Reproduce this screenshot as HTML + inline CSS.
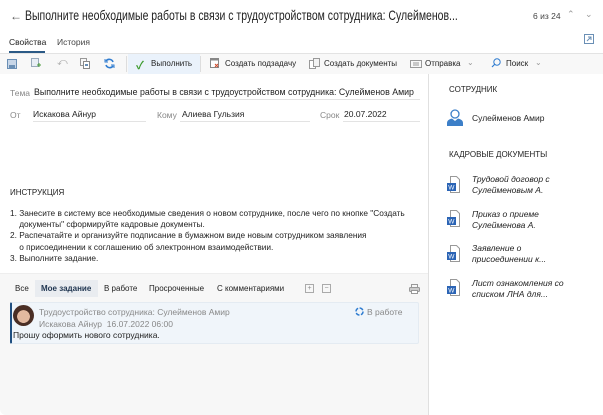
<!DOCTYPE html>
<html><head><meta charset="utf-8">
<style>
*{margin:0;padding:0;box-sizing:border-box}
body{width:603px;height:415px;overflow:hidden;background:#fff;font-family:"Liberation Sans","Noto Sans CJK SC",sans-serif;color:#222;font-size:8.5px;position:relative}
.a{position:absolute;white-space:nowrap}
.g{color:#888}
.ln{position:absolute;height:1px;background:#e3e3e3}
.ic{position:absolute}
</style></head><body>
<div class="a" style="left:10px;top:9px;font-size:12px;color:#555">←</div>
<div class="a" style="left:25px;top:8px;font-size:13.8px;color:#222;transform:scaleX(0.76);transform-origin:0 0">Выполните необходимые работы в связи с трудоустройством сотрудника: Сулейменов...</div>
<div class="a" style="left:533px;top:11px;font-size:8.5px;color:#444">6 из 24</div>
<div class="a" style="left:567px;top:9px;font-size:9px;color:#999">&#8963;</div>
<div class="a" style="left:585px;top:9px;font-size:9px;color:#999">&#8964;</div>
<div class="a" style="left:9px;top:37px;font-size:8.5px;color:#222">Свойства</div>
<div class="a" style="left:57px;top:37px;font-size:8.5px;color:#444">История</div>
<div style="position:absolute;left:9px;top:51px;width:36px;height:2px;background:#2b5a86"></div>
<svg class="ic" style="left:584px;top:34px" width="10" height="10"><rect x="0.5" y="0.5" width="9" height="9" fill="none" stroke="#6a8fb5"/><path d="M3 7L7 3M4 3h3v3" stroke="#6a8fb5" fill="none"/></svg>
<div class="ln" style="left:0;top:53px;width:603px"></div>
<div style="position:absolute;left:0;top:54px;width:603px;height:20px;background:#f8f8f8"></div>
<svg class="ic" style="left:7px;top:59px" width="10" height="10"><rect x="0.5" y="0.5" width="9" height="9" fill="#c7d6e8" stroke="#6a8fb5"/><rect x="2" y="6" width="6" height="3" fill="#6a8fb5"/></svg>
<svg class="ic" style="left:31px;top:58px" width="10" height="11"><rect x="0.5" y="0.5" width="7" height="8" fill="#e8eef5" stroke="#9ab"/><path d="M6 7h4M8 5v4" stroke="#4a9a3a"/></svg>
<div class="a" style="left:57px;top:57px;font-size:10px;color:#aaa">⤺</div>
<svg class="ic" style="left:80px;top:58px" width="11" height="11"><rect x="0.5" y="0.5" width="6" height="7" fill="none" stroke="#999"/><rect x="3.5" y="3.5" width="6" height="7" fill="#fff" stroke="#888"/><rect x="5" y="6" width="3" height="2" fill="#6a8fb5"/></svg>
<svg class="ic" style="left:104px;top:58px" width="11" height="11"><path d="M9 4A4 4 0 0 0 2 3M2 7A4 4 0 0 0 9 8" stroke="#2f7cd0" stroke-width="1.6" fill="none"/><path d="M1 1v3h3M10 10V7H7" fill="none" stroke="#2f7cd0"/></svg>
<div style="position:absolute;left:126px;top:56px;width:1px;height:16px;background:#ddd"></div>
<div style="position:absolute;left:128px;top:54px;width:72px;height:20px;background:#eaf2fb"></div>
<div class="a" style="left:136px;top:57px;font-size:11px;color:#3c9a2c;font-weight:bold">✓</div>
<div class="a" style="left:151px;top:59px;font-size:8px">Выполнить</div>
<div style="position:absolute;left:200px;top:56px;width:1px;height:16px;background:#ddd"></div>
<svg class="ic" style="left:210px;top:58px" width="10" height="11"><rect x="0.5" y="0.5" width="8" height="9" fill="#fff" stroke="#888"/><rect x="0.5" y="0.5" width="8" height="2" fill="#888"/><path d="M5 6l3 3M8 6l-3 3" stroke="#d04a2a"/></svg>
<div class="a" style="left:225px;top:59px;font-size:8px">Создать подзадачу</div>
<svg class="ic" style="left:309px;top:58px" width="11" height="11"><rect x="0.5" y="2.5" width="6" height="8" fill="#fff" stroke="#999"/><rect x="4.5" y="0.5" width="6" height="8" fill="#f3f3f3" stroke="#999"/></svg>
<div class="a" style="left:324px;top:59px;font-size:8px">Создать документы</div>
<svg class="ic" style="left:410px;top:60px" width="12" height="8"><rect x="0.5" y="0.5" width="11" height="7" fill="none" stroke="#999"/><path d="M3 3h6M3 5h6" stroke="#999"/></svg>
<div class="a" style="left:425px;top:59px;font-size:8px">Отправка</div>
<div class="a" style="left:467px;top:58px;font-size:8px;color:#999">⌄</div>
<svg class="ic" style="left:491px;top:58px" width="10" height="10"><circle cx="6" cy="4" r="3.2" fill="none" stroke="#2f7cd0"/><path d="M4 6L1 9" stroke="#2f7cd0" stroke-width="1.2"/></svg>
<div class="a" style="left:506px;top:59px;font-size:8px">Поиск</div>
<div class="a" style="left:535px;top:58px;font-size:8px;color:#999">⌄</div>
<div style="position:absolute;left:428px;top:74px;width:1px;height:341px;background:#e0e0e0"></div>
<div class="a g" style="left:10px;top:88px">Тема</div>
<div class="a" style="left:34px;top:87px;font-size:8.8px">Выполните необходимые работы в связи с трудоустройством сотрудника: Сулейменов Амир</div>
<div class="ln" style="left:33px;top:99px;width:387px"></div>
<div class="a g" style="left:10px;top:110px">От</div>
<div class="a" style="left:33px;top:109px">Искакова Айнур</div>
<div class="ln" style="left:33px;top:121px;width:113px"></div>
<div class="a g" style="left:157px;top:110px">Кому</div>
<div class="a" style="left:182px;top:109px">Алиева Гульзия</div>
<div class="ln" style="left:180px;top:121px;width:130px"></div>
<div class="a g" style="left:320px;top:110px">Срок</div>
<div class="a" style="left:344px;top:109px">20.07.2022</div>
<div class="ln" style="left:343px;top:121px;width:77px"></div>
<div class="a" style="left:10px;top:188px;font-size:8px">ИНСТРУКЦИЯ</div>
<div class="a" style="left:10px;top:208px;line-height:11.2px;font-size:8.3px">1. Занесите в систему все необходимые сведения о новом сотруднике, после чего по кнопке "Создать<br>&nbsp;&nbsp;&nbsp;&nbsp;документы" сформируйте кадровые документы.<br>2. Распечатайте и организуйте подписание в бумажном виде новым сотрудником заявления<br>&nbsp;&nbsp;&nbsp;&nbsp;о присоединении к соглашению об электронном взаимодействии.<br>3. Выполните задание.</div>
<div style="position:absolute;left:0;top:273px;width:428px;height:142px;background:#f7f7f7;border-bottom-left-radius:6px;border-top:1px solid #eee"></div>
<div style="position:absolute;left:35px;top:280px;width:63px;height:17px;background:#e9ecf0"></div>
<div class="a" style="left:15px;top:284px;font-size:8px">Все</div>
<div class="a" style="left:41px;top:284px;font-size:8px;font-weight:bold;color:#1f3550">Мое задание</div>
<div class="a" style="left:104px;top:284px;font-size:8px">В работе</div>
<div class="a" style="left:149px;top:284px;font-size:8px">Просроченные</div>
<div class="a" style="left:217px;top:284px;font-size:8px">С комментариями</div>
<div style="position:absolute;left:305px;top:284px;width:9px;height:9px;border:1px solid #aaa;font-size:7px;line-height:7px;text-align:center;color:#888">+</div>
<div style="position:absolute;left:322px;top:284px;width:9px;height:9px;border:1px solid #aaa;font-size:7px;line-height:7px;text-align:center;color:#888">−</div>
<svg class="ic" style="left:409px;top:284px" width="11" height="10"><rect x="2.5" y="0.5" width="6" height="3" fill="none" stroke="#999"/><rect x="0.5" y="3.5" width="10" height="4" rx="1" fill="#ccc" stroke="#999"/><rect x="2.5" y="6.5" width="6" height="3" fill="#fff" stroke="#999"/></svg>
<div style="position:absolute;left:10px;top:302px;width:409px;height:42px;background:#f0f5fa;border:1px solid #e4ebf2;border-left:2px solid #1f4e80;border-radius:2px"></div>
<div style="position:absolute;left:13px;top:305px;width:21px;height:21px;border-radius:50%;background:radial-gradient(circle at 50% 55%,#e3b9a0 0 40%,#4a2e25 42%)"></div>
<div class="a" style="left:39px;top:307px;color:#888">Трудоустройство сотрудника: Сулейменов Амир</div>
<div class="a" style="left:39px;top:319px;color:#888">Искакова Айнур&nbsp;&nbsp;16.07.2022 06:00</div>
<div class="a" style="left:13px;top:330px">Прошу оформить нового сотрудника.</div>
<svg class="ic" style="left:355px;top:307px" width="9" height="9"><circle cx="4.5" cy="4.5" r="3.5" fill="none" stroke="#2f7cd0" stroke-width="1.5" stroke-dasharray="4 1.5"/></svg>
<div class="a" style="left:367px;top:307px;color:#888">В работе</div>
<div class="a" style="left:449px;top:85px;font-size:8px">СОТРУДНИК</div>
<svg class="ic" style="left:447px;top:109px" width="16" height="17"><circle cx="8" cy="5" r="4" fill="#fff" stroke="#3c7fc8" stroke-width="1.3"/><path d="M0 17v-3c0-3 3-4 5-4.5L8 12l3-2.5c2 .5 5 1.5 5 4.5v3z" fill="#3c7fc8"/></svg>
<div class="a" style="left:472px;top:113px">Сулейменов Амир</div>
<div class="a" style="left:449px;top:150px;font-size:8px">КАДРОВЫЕ ДОКУМЕНТЫ</div>
<div class="a" style="left:472px;top:174px;font-style:italic;line-height:11px">Трудовой договор с<br>Сулейменовым А.</div>
<div class="a" style="left:472px;top:209px;font-style:italic;line-height:11px">Приказ о приеме<br>Сулейменова А.</div>
<div class="a" style="left:472px;top:243px;font-style:italic;line-height:11px">Заявление о<br>присоединении к...</div>
<div class="a" style="left:472px;top:278px;font-style:italic;line-height:11px">Лист ознакомления со<br>списком ЛНА для...</div>
<svg class="ic" style="left:447px;top:176px" width="14" height="17"><path d="M3.5 .5h6l3 3v13h-9z" fill="#fff" stroke="#999"/><rect x="0" y="7" width="9" height="8" fill="#2b64b5"/><text x="1.3" y="13.5" font-size="6.5" fill="#fff" font-family="Liberation Sans">W</text></svg>
<svg class="ic" style="left:447px;top:210px" width="14" height="17"><path d="M3.5 .5h6l3 3v13h-9z" fill="#fff" stroke="#999"/><rect x="0" y="7" width="9" height="8" fill="#2b64b5"/><text x="1.3" y="13.5" font-size="6.5" fill="#fff" font-family="Liberation Sans">W</text></svg>
<svg class="ic" style="left:447px;top:245px" width="14" height="17"><path d="M3.5 .5h6l3 3v13h-9z" fill="#fff" stroke="#999"/><rect x="0" y="7" width="9" height="8" fill="#2b64b5"/><text x="1.3" y="13.5" font-size="6.5" fill="#fff" font-family="Liberation Sans">W</text></svg>
<svg class="ic" style="left:447px;top:279px" width="14" height="17"><path d="M3.5 .5h6l3 3v13h-9z" fill="#fff" stroke="#999"/><rect x="0" y="7" width="9" height="8" fill="#2b64b5"/><text x="1.3" y="13.5" font-size="6.5" fill="#fff" font-family="Liberation Sans">W</text></svg>
</body></html>
